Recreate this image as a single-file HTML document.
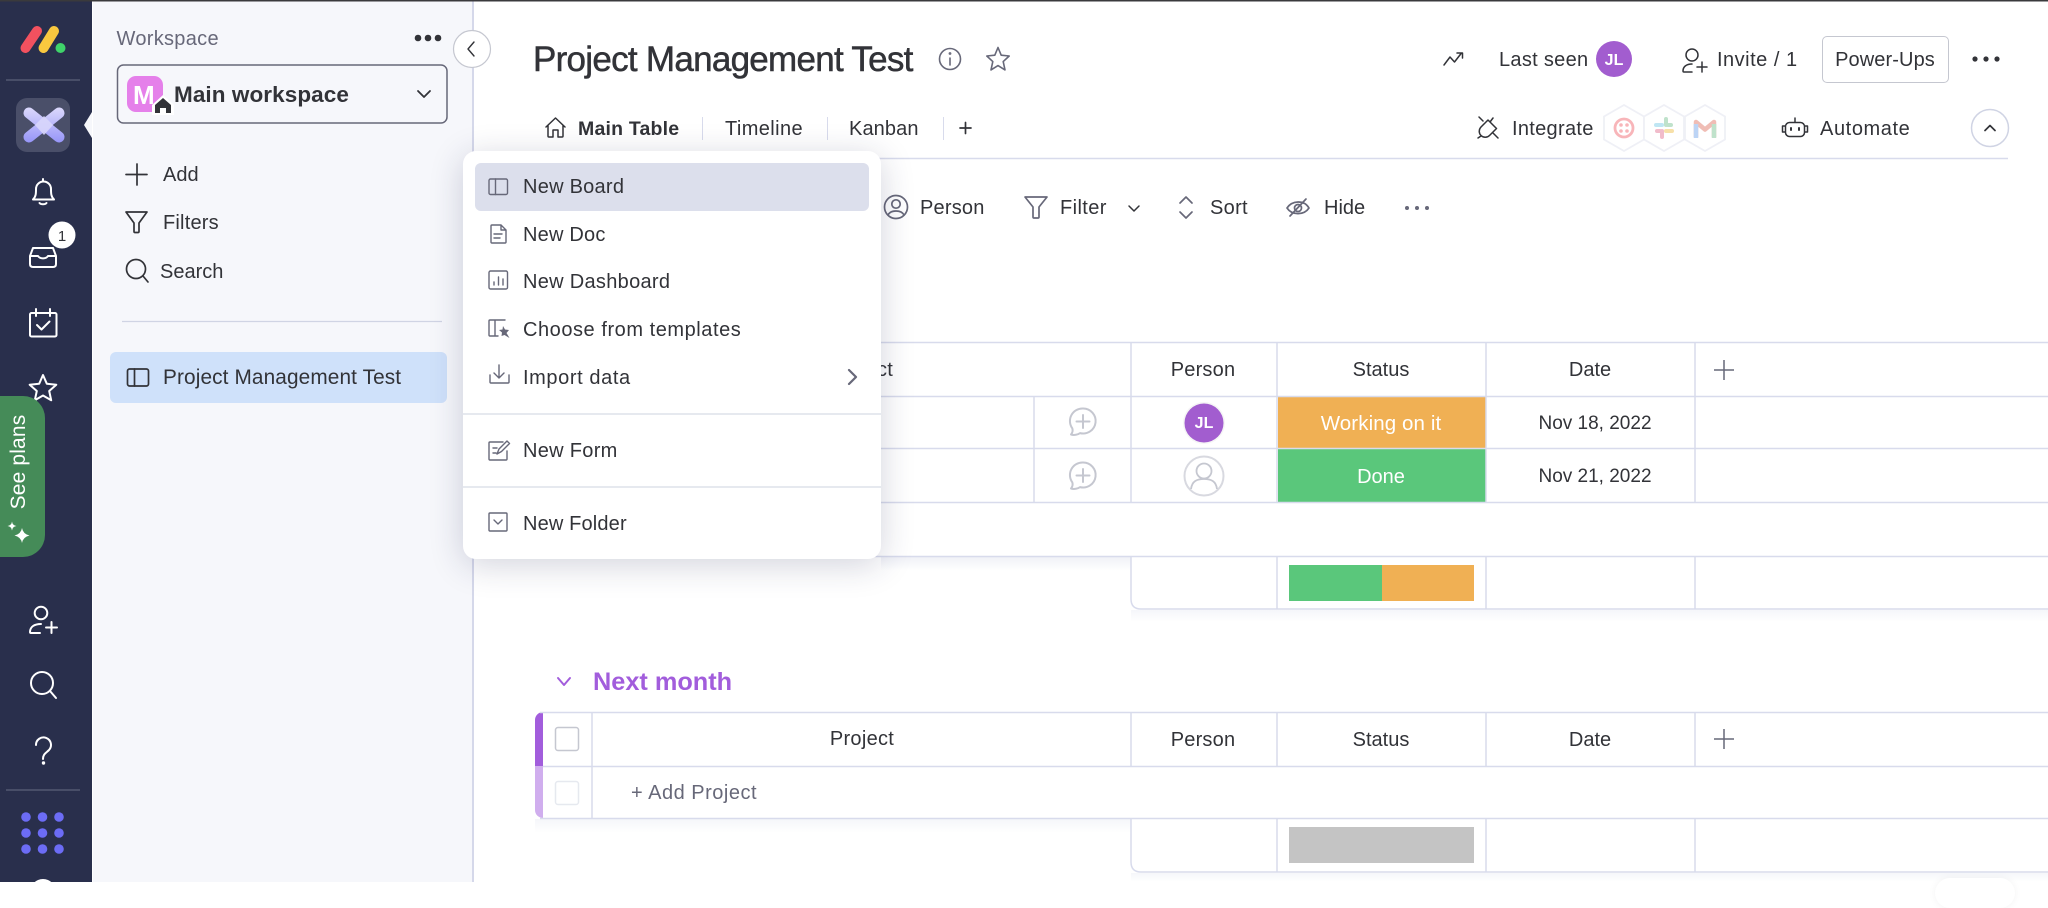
<!DOCTYPE html>
<html lang="en">
<head>
<meta charset="utf-8">
<title>Project Management Test</title>
<style>
html,body{margin:0;padding:0;width:2048px;height:882px;overflow:hidden;background:#fff;font-family:"Liberation Sans",sans-serif;color:#323338}
.a{position:absolute}
.t{position:absolute;white-space:nowrap;line-height:24px;height:24px;margin-top:-11.500px;font-size:20px}
.c{transform:translateX(-50%)}
svg{position:absolute;left:0;top:0;overflow:visible}
</style>
</head>
<body>
<!-- backgrounds -->
<div class="a" style="left:93px;top:0;width:379px;height:882px;background:#f6f7fb"></div>
<div class="a" style="left:472px;top:0;width:1.5px;height:882px;background:#d5d8ea"></div>
<div class="a" style="left:0;top:0;width:92px;height:882px;background:#292f4c"></div>

<!-- table colours -->
<div class="a" style="left:1278px;top:397px;width:208px;height:51px;background:#f0b054"></div>
<div class="a" style="left:1278px;top:449px;width:208px;height:53px;background:#5ac77b"></div>
<div class="a" style="left:1289px;top:565px;width:93px;height:36px;background:#5ac77b"></div>
<div class="a" style="left:1382px;top:565px;width:92px;height:36px;background:#f0b054"></div>
<div class="a" style="left:1289px;top:827px;width:185px;height:36px;background:#c4c4c4"></div>
<div class="a" style="left:881px;top:557px;width:250px;height:14px;background:linear-gradient(#f0f1f7,#fff)"></div>
<div class="a" style="left:1131px;top:610px;width:917px;height:12px;background:linear-gradient(#f5f6fa,#fff)"></div>
<div class="a" style="left:535px;top:819px;width:596px;height:14px;background:linear-gradient(#f5f6fa,#fff)"></div>
<div class="a" style="left:1131px;top:873px;width:917px;height:9px;background:linear-gradient(#f5f6fa,#fff)"></div>
<div class="a" style="left:535px;top:712px;width:8px;height:54px;background:#a25ddc;border-top-left-radius:8px"></div>
<div class="a" style="left:535px;top:766px;width:8px;height:52px;background:#d0aeee;border-bottom-left-radius:8px"></div>

<svg width="2048" height="882" viewBox="0 0 2048 882" fill="none">
  <!-- table lines -->
  <g stroke="#d8dbec" stroke-width="1.5">
    <path d="M600 158.500H2008"/>
    <path d="M600 342.500H2048M600 396.500H2048M600 448.500H2048M600 502.500H2048M600 556.500H2048"/>
    <path d="M1131 342V502M1277 342V502M1486 342V502M1695 342V502M1034 396V502"/>
    <path d="M1131 556V599q0 10 10 10H2048M1277 556V609M1486 556V609M1695 556V609"/>
    <path d="M540 712.500H2048M543 766.500H2048M540 818.500H2048"/>
    <path d="M592 712V818M1131 712V766M1277 712V766M1486 712V766M1695 712V766"/>
    <path d="M1131 818V862q0 10 10 10H2048M1277 818V872M1486 818V872M1695 818V872"/>
    <rect x="555.500" y="727.500" width="23" height="23" rx="2.500" stroke="#c5c7d0"/>
    <rect x="555.500" y="781.500" width="23" height="23" rx="2.500" stroke="#e6e9ef"/>
  </g>
  <path d="M1724 729V749M1714 739H1734M1724 360V380M1714 370H1734" stroke="#676879" stroke-width="1.500"/>
  <path d="M558 678l6 7 6-7" stroke="#a25ddc" stroke-width="2" stroke-linecap="round" stroke-linejoin="round"/>

  <!-- comment icons -->
  <g stroke="#c5c7d0" stroke-width="2" stroke-linecap="round" stroke-linejoin="round">
    <path d="M1083 408.500a12.500 12.500 0 1 1-3 24.600c-2 1.600-6 2.400-9 1.400 1.500-1.800 2-4 1.300-6.200a12.500 12.500 0 0 1 10.700-19.800z"/>
    <path d="M1083 415v13M1076.500 421.500h13"/>
    <path d="M1083 462.500a12.500 12.500 0 1 1-3 24.600c-2 1.600-6 2.400-9 1.400 1.500-1.800 2-4 1.300-6.200a12.500 12.500 0 0 1 10.700-19.800z"/>
    <path d="M1083 469v13M1076.500 475.500h13"/>
  </g>
  <!-- avatars -->
  <circle cx="1204" cy="423" r="21" fill="#eee" opacity=".6"/>
  <circle cx="1204" cy="423" r="19.500" fill="#a25dcf"/>
  <circle cx="1204" cy="476" r="19.500" fill="#fff" stroke="#d8d9e0" stroke-width="2"/>
  <circle cx="1204" cy="471" r="7.500" stroke="#c5c7d0" stroke-width="1.800"/>
  <path d="M1191 489c1-8 6-10 13-10s12 2 13 10" stroke="#c5c7d0" stroke-width="1.800"/>

  <!-- header icons -->
  <g stroke="#676879" stroke-width="1.600" stroke-linecap="round" stroke-linejoin="round">
    <circle cx="950" cy="59" r="10.500"/>
    <path d="M950 58v7"/><circle cx="950" cy="53.500" r=".6"/>
    <path d="M998 47.500l3.200 7.700 8 .8-6 5.600 1.800 8.300-7-4.300-7 4.300 1.800-8.300-6-5.600 8-.8z"/>
  </g>
  <g stroke="#323338" stroke-width="1.500" stroke-linecap="round" stroke-linejoin="round">
    <path d="M546 127l9.500-9 9.500 9M548 125v11q0 1 1 1h4v-7h5v7h4q1 0 1-1v-11"/>
    <path d="M960 128h11M965.500 122.500v11" stroke-width="1.700"/>
    <path d="M1444 65l6-8 4.500 5 7-9M1457 53h5.500v5"/>
    <circle cx="1692" cy="55" r="6"/>
    <path d="M1692 64c-6 0-9 3-9 7q0 1 1 1h8M1702 62v10M1697 67h10" stroke="#323338"/>
    <path d="M1488 120l8.500 8.500-7 7a5.500 5.500 0 0 1-8.500-8.500zM1479 117l4 4M1493 118l-3 4M1493 133l5 5M1481 136l-3 2"/>
    <rect x="1785.500" y="122.500" width="19" height="14" rx="4"/>
    <path d="M1795 118v4M1785 126h-2.500v6h2.500M1805 126h2.500v6h-2.500"/>
    <path d="M1791 128v2M1799 128v2" stroke-width="2"/>
    <path d="M1985 130.500l5-5 5 5" stroke-width="1.700"/>
  </g>
  <circle cx="1990" cy="128" r="18.500" fill="none" stroke="#d0d4e4" stroke-width="1.500"/>
  <g fill="#323338"><circle cx="1975" cy="59" r="2.600"/><circle cx="1986" cy="59" r="2.600"/><circle cx="1997" cy="59" r="2.600"/></g>
  <circle cx="1614" cy="59" r="18" fill="#a25dcf"/>

  <!-- integration hexes -->
  <g fill="#fff" stroke="#eff0f6" stroke-width="1.800">
    <path d="M1624 105l20 11.500v23L1624 151l-20-11.500v-23z"/>
    <path d="M1664 105l20 11.500v23L1664 151l-20-11.500v-23z"/>
    <path d="M1705 105l20 11.500v23L1705 151l-20-11.500v-23z"/>
  </g>
  <circle cx="1624" cy="128" r="9" stroke="#f8b5b9" stroke-width="2.800"/>
  <g fill="#f8b5b9"><circle cx="1621" cy="125" r="1.800"/><circle cx="1627" cy="125" r="1.800"/><circle cx="1621" cy="131" r="1.800"/><circle cx="1627" cy="131" r="1.800"/></g>
  <g stroke-width="4" stroke-linecap="round">
    <path d="M1656 125h6" stroke="#bfe6f3"/><path d="M1666 119v6" stroke="#bfe2cb"/>
    <path d="M1672 131h-6" stroke="#f7e0a8"/><path d="M1662 137v-6" stroke="#f1bccb"/>
    <path d="M1668 125h3" stroke="#bfe2cb"/><path d="M1660 131h-3" stroke="#f1bccb"/>
  </g>
  <path d="M1696 137v-15l9 7.500 9-7.500v15" stroke="#f0bdb5" stroke-width="4.500" stroke-linejoin="round"/>
  <path d="M1696 124v14" stroke="#bcd4f5" stroke-width="4.500"/>
  <path d="M1714 124v14" stroke="#bfe2cb" stroke-width="4.500"/>

  <!-- toolbar icons -->
  <g stroke="#676879" stroke-width="1.700" stroke-linecap="round" stroke-linejoin="round">
    <circle cx="896" cy="207" r="11.500"/><circle cx="896" cy="204" r="4.200"/>
    <path d="M888 215c1.500-3 4-4 8-4s6.500 1 8 4"/>
    <path d="M1025 197h22l-8 10v10q0 1-1 1h-4q-1 0-1-1v-10z"/>
    <path d="M1180 203l6-6 6 6M1180 212l6 6 6-6"/>
    <path d="M1287 208c5-7.500 17-8.500 22 0-5 7.500-17 7.500-22 0z"/><circle cx="1298" cy="208" r="3.500"/>
    <path d="M1290 216l16-17"/>
  </g>
  <path d="M1129 206l5 5 5-5" stroke="#323338" stroke-width="1.500" stroke-linecap="round" stroke-linejoin="round"/>
  <g fill="#676879"><circle cx="1407" cy="208" r="2"/><circle cx="1417" cy="208" r="2"/><circle cx="1427" cy="208" r="2"/></g>

  <!-- left nav -->
  <path d="M6 80H80M6 790H80" stroke="#5c6178" stroke-width="1.200"/>
  <path d="M25.500 48L37 31" stroke="#f2515f" stroke-width="10" stroke-linecap="round"/>
  <path d="M43.500 48L54 31" stroke="#f9c83f" stroke-width="10" stroke-linecap="round"/>
  <circle cx="60.500" cy="48" r="5" fill="#3fd36a"/>
  <rect x="16" y="98" width="54" height="54" rx="11" fill="#4a4f69"/>
  <defs><linearGradient id="g" gradientUnits="userSpaceOnUse" x1="0" y1="107" x2="0" y2="143"><stop offset="0" stop-color="#dddafc"/><stop offset="1" stop-color="#9594f8"/></linearGradient></defs>
  <path d="M29 113L59 137M59 113L29 137" stroke="url(#g)" stroke-width="11" stroke-linecap="round"/>
  <path d="M44 116l9 9-9 10-9-10z" fill="#d8d6fb" opacity=".9"/>
  <path d="M92 112L84 125 92 138z" fill="#f6f7fb"/>
  <g stroke="#fff" stroke-width="2" stroke-linecap="round" stroke-linejoin="round">
    <path d="M33 199.500c3-3 3-6 3-10.500a7.500 7.500 0 0 1 15 0c0 4.500 0 7.500 3 10.500zM43 179v1.500M39.500 203a4 2.500 0 0 0 7 0"/>
    <path d="M30 256l3-8h20l3 8v8q0 3-3 3H33q-3 0-3-3zM30 256h8a5.500 4 0 0 0 10 0h8"/>
    <rect x="30" y="313" width="26.500" height="23.500" rx="1.500"/>
    <path d="M36 309v7M50 309v7M37 325l4.500 4.500 8-8"/>
    <path d="M43 375l3.800 8.700 9.500 1-7.100 6.300 2 9.300-8.200-4.800-8.200 4.800 2-9.300-7.100-6.300 9.500-1z"/>
    <circle cx="41" cy="613" r="6.300"/>
    <path d="M41 624c-7 0-11 3-11 8q0 1 1 1h9M51.500 622v11M46 627.500h11"/>
    <circle cx="42" cy="683" r="11"/><path d="M50 691l6 7"/>
    <path d="M36 745a7.500 7.500 0 1 1 13 5c-3 3-6 4-6 9"/>
  </g>
  <circle cx="43.500" cy="763" r="1.700" fill="#fff"/>
  <g fill="#6c6cf5">
    <circle cx="26" cy="817" r="4.800"/><circle cx="42.500" cy="817" r="4.800"/><circle cx="59" cy="817" r="4.800"/>
    <circle cx="26" cy="833" r="4.800"/><circle cx="42.500" cy="833" r="4.800"/><circle cx="59" cy="833" r="4.800"/>
    <circle cx="26" cy="849" r="4.800"/><circle cx="42.500" cy="849" r="4.800"/><circle cx="59" cy="849" r="4.800"/>
  </g>
  <circle cx="43" cy="892" r="13" fill="#fff"/>
  <rect x="0" y="0" width="2048" height="1.500" fill="#3a3a3c"/>
</svg>

<!-- See plans -->
<div class="a" style="left:0;top:396px;width:45px;height:161px;background:#458b58;border-radius:0 22px 22px 0"></div>
<div class="t c" style="left:19px;top:461px;color:#fff;font-size:21px;letter-spacing:.15px;transform:translateX(-50%) rotate(-90deg)">See plans</div>
<svg width="92" height="882" viewBox="0 0 92 882" fill="#fff">
  <path d="M22 528q1 6 7.500 7.500-6.500 1.500-7.500 7.500-1-6-7.500-7.500 6.500-1.500 7.500-7.500z"/>
  <path d="M12 521.500q.5 4 4.500 4.500-4 .5-4.500 4.500-.5-4-4.500-4.500 4-.5 4.500-4.500z"/>
  <circle cx="62" cy="235" r="13.500"/>
</svg>
<div class="t c" style="left:62px;top:236px;font-size:15px;color:#323338">1</div>

<!-- sidebar -->
<div class="t" style="left:116.500px;top:38px;color:#676879;letter-spacing:.3px">Workspace</div>
<svg width="480" height="420" viewBox="0 0 480 420" fill="none">
  <g fill="#323338"><circle cx="418" cy="38" r="3.300"/><circle cx="428" cy="38" r="3.300"/><circle cx="438" cy="38" r="3.300"/></g>
  <rect x="117.500" y="65" width="329.500" height="58" rx="6" stroke="#676879" stroke-width="1.500" fill="#f6f7fb"/>
  <rect x="127" y="76" width="36" height="36" rx="9" fill="#e580ea"/>
  <path d="M152 105l11-10 11 10v10h-22z" fill="#fff"/>
  <path d="M155 105l8-7 8 7v8h-5v-5h-6v5h-5z" fill="#323338"/>
  <path d="M418 91l6 6 6-6" stroke="#323338" stroke-width="1.800" stroke-linecap="round" stroke-linejoin="round"/>
  <g stroke="#323338" stroke-width="1.700" stroke-linecap="round" stroke-linejoin="round">
    <path d="M137 164v21M126 174.500h21"/>
    <path d="M126 212h21l-8 11v8.500q0 1-1 1h-3q-1 0-1-1V223z"/>
    <circle cx="136" cy="269" r="9.500"/><path d="M143 276l5 6"/>
  </g>
  <path d="M122 321.500H442" stroke="#d0d4e4" stroke-width="1.200"/>
  <rect x="110" y="352" width="337" height="51" rx="6" fill="#cfe1fa"/>
  <g stroke="#323338" stroke-width="1.700" stroke-linecap="round" stroke-linejoin="round">
    <rect x="127.500" y="369" width="21" height="17" rx="2"/><path d="M134.500 369v17"/>
  </g>
</svg>
<div class="t" style="left:163px;top:174px;color:#323338">Add</div>
<div class="t" style="left:163px;top:222px;letter-spacing:.2px">Filters</div>
<div class="t" style="left:160px;top:271px">Search</div>
<div class="t" style="left:163px;top:377px;font-size:20.800px;letter-spacing:.12px">Project Management Test</div>
<div class="t" style="left:174px;top:94px;font-size:22.500px;font-weight:bold;letter-spacing:.08px">Main workspace</div>
<div class="t" style="left:133px;top:94px;color:#fff;font-size:26px;font-weight:bold">M</div>
<svg width="2048" height="100" viewBox="0 0 2048 100" fill="none">
  <circle cx="472" cy="49" r="18.500" fill="#fff" stroke="#c5c7d0" stroke-width="1.200"/>
  <path d="M474 42l-6 7 6 7" stroke="#323338" stroke-width="1.400" stroke-linecap="round" stroke-linejoin="round"/>
</svg>

<!-- header text -->
<div class="t" style="left:533px;top:59px;font-size:35px;height:40px;line-height:40px;margin-top:-19.500px;letter-spacing:-.72px;-webkit-text-stroke:.5px #323338">Project Management Test</div>
<div class="t" style="left:578px;top:128px;font-weight:bold;font-size:19.500px;letter-spacing:.2px">Main Table</div>
<div class="a" style="left:702px;top:117px;width:1.200px;height:23px;background:#d8dbec"></div>
<div class="t" style="left:725px;top:128px;letter-spacing:.4px">Timeline</div>
<div class="a" style="left:827px;top:117px;width:1.200px;height:23px;background:#d8dbec"></div>
<div class="t" style="left:849px;top:128px;letter-spacing:.1px">Kanban</div>
<div class="a" style="left:943px;top:117px;width:1.200px;height:23px;background:#d8dbec"></div>
<div class="t" style="left:1499px;top:59px;letter-spacing:.3px">Last seen</div>
<div class="t c" style="left:1614px;top:60px;color:#fff;font-size:16px;font-weight:bold">JL</div>
<div class="t" style="left:1717px;top:59px;letter-spacing:.5px">Invite / 1</div>
<div class="a" style="left:1822px;top:36px;width:125px;height:45px;border:1.500px solid #c5c7d0;border-radius:5px"></div>
<div class="t c" style="left:1885px;top:59px;letter-spacing:.1px">Power-Ups</div>
<div class="t" style="left:1512px;top:128px;letter-spacing:.3px">Integrate</div>
<div class="t" style="left:1820px;top:128px;letter-spacing:.6px">Automate</div>

<!-- toolbar text -->
<div class="t" style="left:920px;top:207px;letter-spacing:.2px">Person</div>
<div class="t" style="left:1060px;top:207px;letter-spacing:.4px">Filter</div>
<div class="t" style="left:1210px;top:207px;letter-spacing:.3px">Sort</div>
<div class="t" style="left:1324px;top:207px">Hide</div>

<!-- table text -->
<div class="t c" style="left:861px;top:369px;letter-spacing:.3px">Project</div>
<div class="t c" style="left:1203px;top:369px;letter-spacing:.2px">Person</div>
<div class="t c" style="left:1381px;top:369px">Status</div>
<div class="t c" style="left:1590px;top:369px">Date</div>
<div class="t c" style="left:1204px;top:423px;color:#fff;font-size:16px;font-weight:bold">JL</div>
<div class="t c" style="left:1381px;top:423px;color:#fff;font-size:20.500px;letter-spacing:.1px">Working on it</div>
<div class="t c" style="left:1381px;top:476px;color:#fff">Done</div>
<div class="t c" style="left:1595px;top:423px;font-size:19px">Nov 18, 2022</div>
<div class="t c" style="left:1595px;top:476px;font-size:19px">Nov 21, 2022</div>

<div class="t" style="left:593px;top:682px;font-size:25.300px;font-weight:bold;color:#a25ddc;height:30px;line-height:30px;margin-top:-15px">Next month</div>
<div class="t c" style="left:862px;top:738px;letter-spacing:.3px">Project</div>
<div class="t c" style="left:1203px;top:739px;letter-spacing:.2px">Person</div>
<div class="t c" style="left:1381px;top:739px">Status</div>
<div class="t c" style="left:1590px;top:739px">Date</div>
<div class="t" style="left:631px;top:792px;color:#676879;letter-spacing:.5px">+ Add Project</div>

<!-- floating pill bottom right -->
<div class="a" style="left:1935px;top:878px;width:80px;height:30px;border-radius:15px;background:#fff;box-shadow:0 0 8px rgba(0,0,0,.05)"></div>

<!-- dropdown menu -->
<div class="a" style="left:463px;top:151px;width:418px;height:408px;background:#fff;border-radius:13px;box-shadow:0 6px 34px rgba(29,36,80,.2)">
  <div class="a" style="left:12px;top:12px;width:394px;height:48px;background:#dcdfec;border-radius:6px"></div>
  <div class="a" style="left:0;top:262px;width:418px;height:1.500px;background:#e6e9ef"></div>
  <div class="a" style="left:0;top:335px;width:418px;height:1.500px;background:#e6e9ef"></div>
</div>
<svg width="2048" height="600" viewBox="0 0 2048 600" fill="none">
  <g stroke="#676879" stroke-width="1.400" stroke-linecap="round" stroke-linejoin="round">
    <rect x="489" y="179" width="18.500" height="15.500" rx="1.500"/><path d="M495.500 179v15.500"/>
    <path d="M492 225h9l5 5v12q0 1-1 1h-13q-1 0-1-1v-16q0-1 1-1zM501 225v5h5M494 234h8M494 238h6"/>
    <rect x="489" y="271" width="18.500" height="18" rx="1.500"/><path d="M494 285v-3M498.500 285v-8M503 285v-6"/>
    <path d="M505 320h-15q-1 0-1 1v14q0 1 1 1h8M495 320v16"/>
    <path d="M490 375v7q0 1 1 1h17q1 0 1-1v-7M499 365v13M494 373l5 5 5-5"/>
    <path d="M503 442h-13q-1 0-1 1v16q0 1 1 1h16q1 0 1-1v-8M493 448h4M493 453h3M497 454l2-5 8-8 2.500 2.500-8 8z"/>
    <rect x="489" y="513" width="18" height="18" rx="1"/><path d="M494 520l4 4 4-4"/>
  </g>
  <path d="M503 326l2 3.500 4 .5-2.500 3 3 5-5-3-3 1 .5-3.500-3-2.500 3.500-.5z" fill="#676879"/>
  <path d="M849 370l7 7-7 7" stroke="#676879" stroke-width="2.200" stroke-linecap="round" stroke-linejoin="round"/>
</svg>
<div class="t" style="left:523px;top:186px;letter-spacing:.25px">New Board</div>
<div class="t" style="left:523px;top:234px;letter-spacing:.2px">New Doc</div>
<div class="t" style="left:523px;top:281px;letter-spacing:.3px">New Dashboard</div>
<div class="t" style="left:523px;top:329px;letter-spacing:.55px">Choose from templates</div>
<div class="t" style="left:523px;top:377px;letter-spacing:.6px">Import data</div>
<div class="t" style="left:523px;top:450px;letter-spacing:.3px">New Form</div>
<div class="t" style="left:523px;top:523px;letter-spacing:.15px">New Folder</div>
</body>
</html>
